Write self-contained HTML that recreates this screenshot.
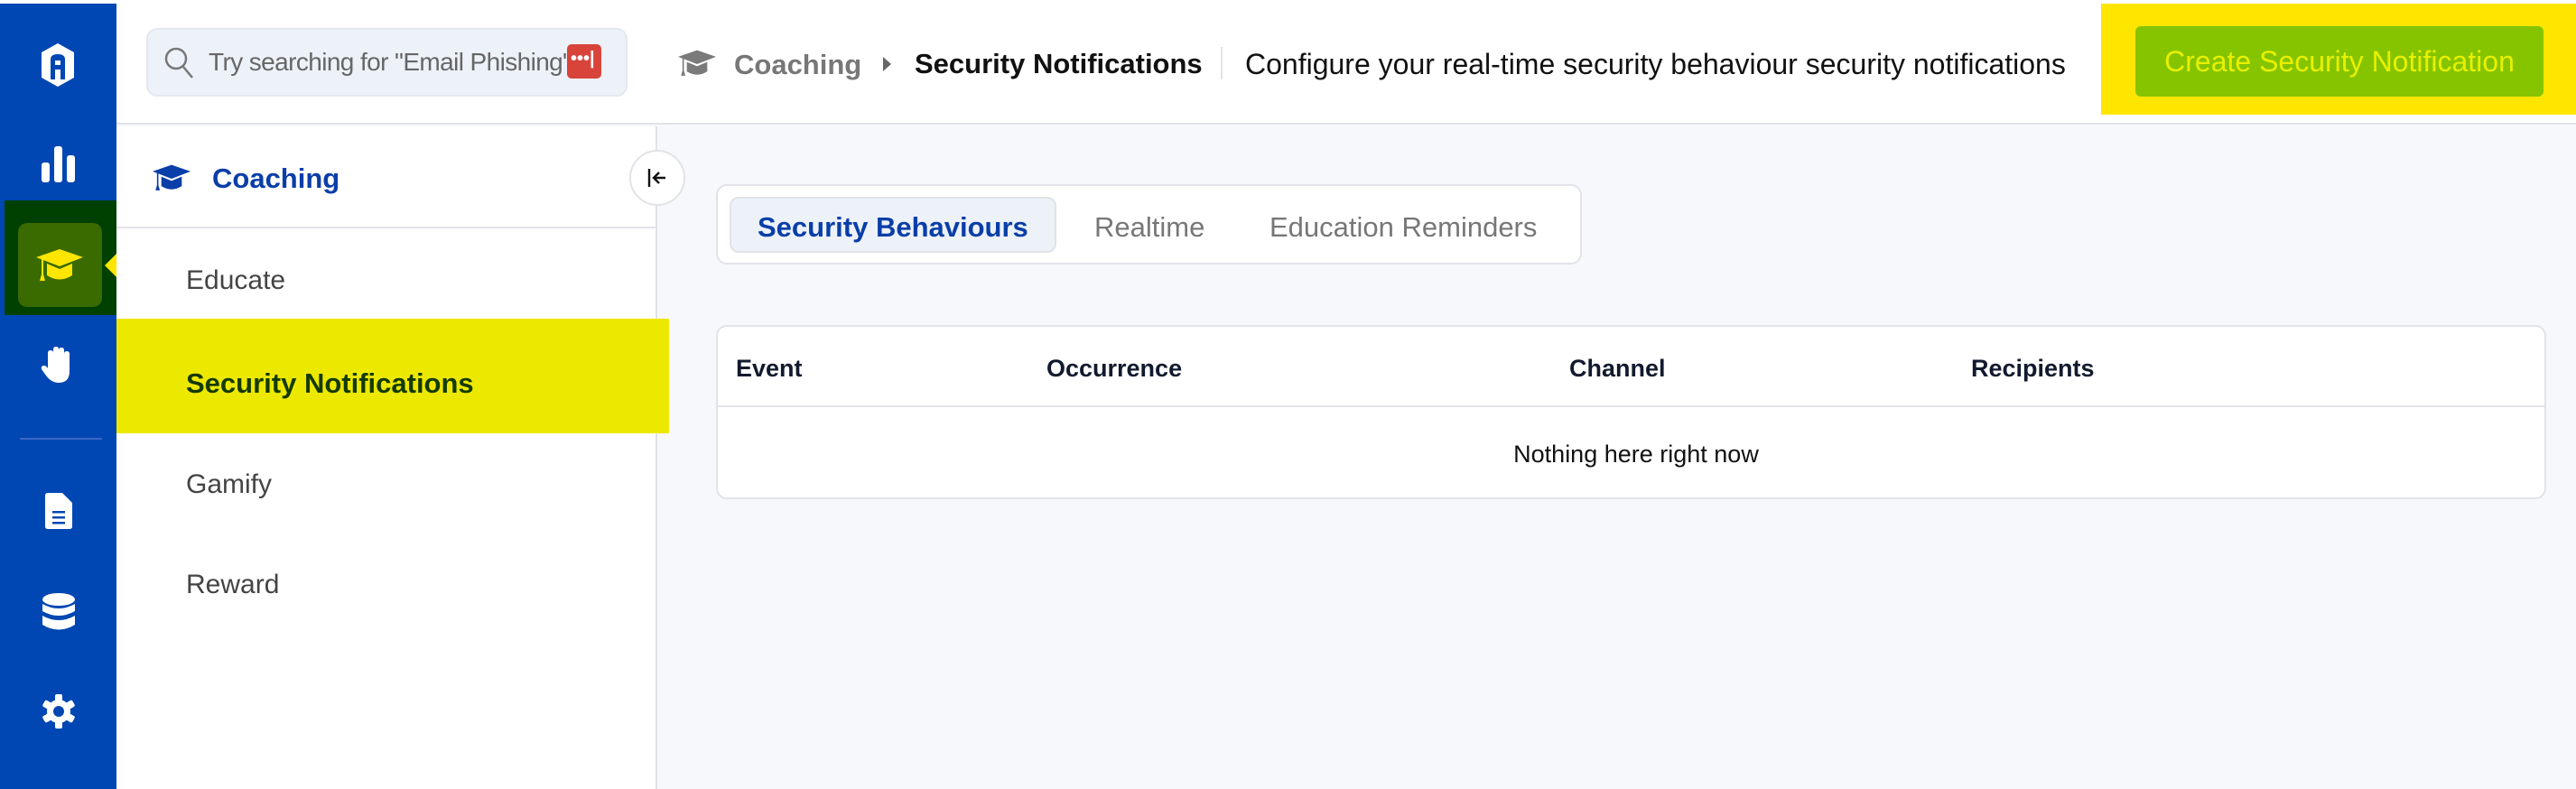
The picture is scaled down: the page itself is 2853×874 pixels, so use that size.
<!DOCTYPE html>
<html><head><meta charset="utf-8"><style>
*{margin:0;padding:0;box-sizing:border-box}
body{width:2853px;height:874px;position:relative;overflow:hidden;background:#f7f8fc;font-family:"Liberation Sans",sans-serif}
.a{position:absolute}
.t{position:absolute;white-space:nowrap;line-height:1}
</style></head><body>
<div class="a" style="left:129px;top:0;width:2724px;height:138px;background:#fff;border-bottom:2px solid #e1e3e8"></div>
<div class="a" style="left:0;top:4px;width:129px;height:870px;background:#0047b3"></div>
<div class="a" style="left:0;top:0;width:129px;height:4px;background:#fff"></div>
<svg class="a" style="left:44px;top:46px" width="40" height="52" viewBox="0 0 40 52"><path d="M20 2 L38 12 L38 40 L20 50 L2 40 L2 12 Z" fill="#fff"/><path d="M12 42 V20 Q12 14 20 14 Q28 14 28 20 V42 H23 V31 H17 V42 Z M17 21 V26 H23 V21 Z" fill="#0047b3"/></svg>
<svg class="a" style="left:46px;top:162px" width="38" height="40"><rect x="0" y="18" width="9" height="22" rx="3" fill="#fff"/><rect x="14" y="0" width="9" height="40" rx="3" fill="#fff"/><rect x="28" y="10" width="9" height="30" rx="3" fill="#fff"/></svg>
<div class="a" style="left:5px;top:222px;width:124px;height:127px;background:#004000"></div>
<div class="a" style="left:129px;top:222px;width:17px;height:127px;background:#ffe600"></div>
<div class="a" style="left:20px;top:247px;width:93px;height:93px;background:#3a6b00;border-radius:10px"></div>
<div class="a" style="left:116px;top:280px;width:0;height:0;border-top:14px solid transparent;border-bottom:14px solid transparent;border-right:14px solid #ffe600"></div>
<svg class="a" style="left:40px;top:276px" width="52" height="38" viewBox="0 0 52 38"><path d="M26 0 L52 9 L26 19 L0 9 Z" fill="#ffe600"/><path d="M12 16 V29 Q26 38 40 29 V16 L26 22 Z" fill="#ffe600"/><path d="M6 11 V28 L4 35 H10 L8 28 V12" fill="#ffe600"/></svg>
<svg class="a" style="left:45px;top:383px" width="38" height="42" viewBox="0 0 38 42"><path d="M8 22 V8 Q8 5 11 5 Q14 5 14 8 V18 V4 Q14 1 17 1 Q20 1 20 4 V18 V5 Q20 2 23 2 Q26 2 26 5 V18 V9 Q26 6 29 6 Q32 6 32 9 V28 Q32 41 20 41 Q12 41 6 33 L1 26 Q0 22 4 22 Q6 22 8 25 Z" fill="#fff"/></svg>
<div class="a" style="left:22px;top:485px;width:91px;height:2px;background:#3a67c4"></div>
<svg class="a" style="left:50px;top:546px" width="30" height="40" viewBox="0 0 30 40"><path d="M0 3 Q0 0 3 0 H19 L30 11 V37 Q30 40 27 40 H3 Q0 40 0 37 Z" fill="#fff"/><rect x="8" y="20" width="14" height="2.5" fill="#0047b3"/><rect x="8" y="26" width="14" height="2.5" fill="#0047b3"/><rect x="8" y="32" width="14" height="2.5" fill="#0047b3"/></svg>
<svg class="a" style="left:47px;top:657px" width="36" height="42" viewBox="0 0 36 42"><ellipse cx="18" cy="7" rx="18" ry="7" fill="#fff"/><path d="M0 12 Q18 22 36 12 V20 Q18 30 0 20 Z" fill="#fff"/><path d="M0 25 Q18 35 36 25 V35 Q18 46 0 35 Z" fill="#fff"/></svg>
<svg class="a" style="left:45px;top:768px" width="40" height="40" viewBox="0 0 40 40"><g fill="#fff"><circle cx="20" cy="20" r="13"/><rect x="16" y="1" width="8" height="38" rx="2"/><rect x="16" y="1" width="8" height="38" rx="2" transform="rotate(60 20 20)"/><rect x="16" y="1" width="8" height="38" rx="2" transform="rotate(120 20 20)"/></g><circle cx="20" cy="20" r="6" fill="#0047b3"/></svg>
<div class="a" style="left:162px;top:31px;width:533px;height:76px;background:#edf2f9;border:2px solid #e3e8f0;border-radius:12px;overflow:hidden"></div>
<svg class="a" style="left:182px;top:52px" width="34" height="36" viewBox="0 0 34 36"><circle cx="13" cy="13" r="11" fill="none" stroke="#777" stroke-width="2.5"/><path d="M21 22 L31 34" stroke="#777" stroke-width="2.5"/></svg>
<div class="t" style="left:231px;top:55px;font-size:28px;color:#666;letter-spacing:-0.6px">Try searching for "Email Phishing"</div>
<div class="a" style="left:628px;top:49px;width:38px;height:38px;background:#d9443a;border-radius:5px"></div>
<div class="t" style="left:632px;top:55px;font-size:20px;color:#fff;font-weight:bold">•••|</div>
<svg class="a" style="left:751px;top:55px" width="42" height="32" viewBox="0 0 52 38"><path d="M26 0 L52 9 L26 19 L0 9 Z" fill="#7a7a7a"/><path d="M12 16 V29 Q26 38 40 29 V16 L26 22 Z" fill="#7a7a7a"/><path d="M6 11 V28 L4 35 H10 L8 28 V12" fill="#7a7a7a"/></svg>
<div class="t" style="left:813px;top:56px;font-size:31px;color:#777;font-weight:bold">Coaching</div>
<div class="a" style="left:978px;top:63px;width:0;height:0;border-top:8px solid transparent;border-bottom:8px solid transparent;border-left:9px solid #666"></div>
<div class="t" style="left:1013px;top:55px;font-size:31px;color:#111;font-weight:bold">Security Notifications</div>
<div class="a" style="left:1352px;top:52px;width:2px;height:36px;background:#e1e3e8"></div>
<div class="t" style="left:1379px;top:55px;font-size:32px;color:#111">Configure your real-time security behaviour security notifications</div>
<div class="a" style="left:2327px;top:4px;width:526px;height:123px;background:#ffe600"></div>
<div class="a" style="left:2365px;top:29px;width:452px;height:78px;background:#86c400;border-radius:6px"></div>
<div class="t" style="left:2365px;top:52px;width:452px;text-align:center;font-size:32px;color:#e8f000">Create Security Notification</div>
<div class="a" style="left:129px;top:140px;width:599px;height:734px;background:#fff;border-right:2px solid #e1e3e8"></div>
<div class="a" style="left:129px;top:251px;width:599px;height:2px;background:#e1e3e8"></div>
<svg class="a" style="left:169px;top:182px" width="42" height="32" viewBox="0 0 52 38"><path d="M26 0 L52 9 L26 19 L0 9 Z" fill="#0a3ea8"/><path d="M12 16 V29 Q26 38 40 29 V16 L26 22 Z" fill="#0a3ea8"/><path d="M6 11 V28 L4 35 H10 L8 28 V12" fill="#0a3ea8"/></svg>
<div class="t" style="left:235px;top:182px;font-size:31px;color:#0a3ea8;font-weight:bold">Coaching</div>
<div class="a" style="left:697px;top:166px;width:62px;height:62px;background:#fff;border:2px solid #e1e3e8;border-radius:50%"></div>
<svg class="a" style="left:713px;top:182px" width="30" height="30" viewBox="0 0 30 30"><path d="M6 5 V25 M24 15 H11 M17 9 L11 15 L17 21" stroke="#111" stroke-width="2.4" fill="none"/></svg>
<div class="t" style="left:206px;top:296px;font-size:30px;color:#444">Educate</div>
<div class="a" style="left:129px;top:353px;width:612px;height:127px;background:#ede800"></div>
<div class="t" style="left:206px;top:409px;font-size:31px;color:#143a00;font-weight:bold">Security Notifications</div>
<div class="t" style="left:206px;top:522px;font-size:30px;color:#444">Gamify</div>
<div class="t" style="left:206px;top:633px;font-size:30px;color:#444">Reward</div>
<div class="a" style="left:793px;top:204px;width:959px;height:89px;background:#fff;border:2px solid #e1e3e8;border-radius:12px"></div>
<div class="a" style="left:808px;top:218px;width:362px;height:62px;background:#edf2f9;border:2px solid #e1e3e8;border-radius:10px"></div>
<div class="t" style="left:839px;top:236px;font-size:31px;color:#0a3ea8;font-weight:bold">Security Behaviours</div>
<div class="t" style="left:1212px;top:236px;font-size:31px;color:#777">Realtime</div>
<div class="t" style="left:1406px;top:236px;font-size:31px;color:#777">Education Reminders</div>
<div class="a" style="left:793px;top:360px;width:2027px;height:193px;background:#fff;border:2px solid #e1e3e8;border-radius:12px"></div>
<div class="a" style="left:795px;top:449px;width:2023px;height:2px;background:#e1e3e8"></div>
<div class="t" style="left:815px;top:395px;font-size:27px;color:#111a2e;font-weight:bold">Event</div>
<div class="t" style="left:1159px;top:395px;font-size:27px;color:#111a2e;font-weight:bold">Occurrence</div>
<div class="t" style="left:1738px;top:395px;font-size:27px;color:#111a2e;font-weight:bold">Channel</div>
<div class="t" style="left:2183px;top:395px;font-size:27px;color:#111a2e;font-weight:bold">Recipients</div>
<div class="t" style="left:1612px;top:490px;width:400px;text-align:center;font-size:27px;color:#111">Nothing here right now</div>
</body></html>
